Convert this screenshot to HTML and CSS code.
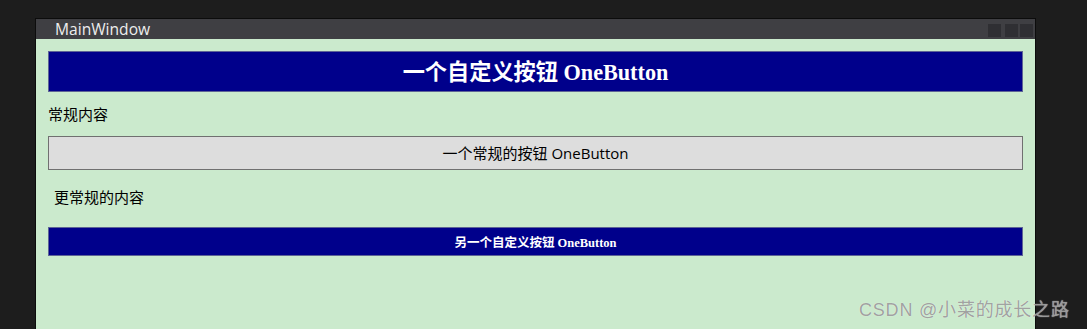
FILE: index.html
```html
<!DOCTYPE html>
<html lang="zh">
<head>
<meta charset="utf-8">
<title>MainWindow</title>
<link rel="stylesheet" href="styles.css">
</head>
<body>
<div class="window">
  <div class="titlebar">
    <span class="title">MainWindow</span>
    <div class="controls">
      <span class="ctl"></span>
      <span class="ctl c2"></span>
      <span class="ctl c3"></span>
    </div>
  </div>
  <div class="content">
    <button class="custom big">一个自定义按钮 OneButton</button>
    <div class="label">常规内容</div>
    <button class="normal">一个常规的按钮 OneButton</button>
    <div class="label indent">更常规的内容</div>
    <button class="custom small">另一个自定义按钮 OneButton</button>
  </div>
</div>
<div class="watermark">CSDN @小菜的成长之路</div>
</body>
</html>
```
FILE: styles.css
```css
html, body {
  margin: 0;
  padding: 0;
  height: 100%;
  overflow: hidden;
}
body {
  background: #1d1d1d;
  font-family: "Noto Sans CJK SC", sans-serif;
  position: relative;
}
.window {
  margin: 18px 0 0 35px;
  width: 999px;
  height: 330px;
  border: 1px solid #0c0c0c;
  display: flex;
  flex-direction: column;
}
.titlebar {
  height: 20px;
  background: #3f3f43;
  display: flex;
  align-items: center;
  justify-content: space-between;
}
.title {
  margin-left: 19px;
  color: #ededed;
  font-family: "Open Sans", "Noto Sans", sans-serif;
  font-size: 15.6px;
  line-height: 20px;
}
.controls {
  display: flex;
  margin-right: 2px;
  margin-top: 2px;
}
.ctl {
  width: 13px;
  height: 13px;
  background: #2f2f33;
}
.c2 { margin-left: 4px; }
.c3 { margin-left: 2px; }
.content {
  flex: 1;
  background: #cbeacd;
  padding: 12px 12px 0 12px;
  display: flex;
  flex-direction: column;
  align-items: stretch;
}
button {
  margin: 0;
  box-sizing: border-box;
  width: 100%;
  cursor: default;
}
.custom {
  background: #00008b;
  border: 1px solid #5e6496;
  color: #ffffff;
  font-family: "Liberation Serif", "Noto Sans CJK SC", serif;
  font-weight: bold;
}
.big {
  height: 41px;
  font-size: 22.2px;
  padding: 0 0 3px 0;
}
.small {
  height: 29px;
  font-size: 12.5px;
  padding: 0 0 1px 0;
  margin-top: 20px;
}
.label {
  font-family: "Noto Sans CJK SC", sans-serif;
  font-size: 15px;
  line-height: 20px;
  color: #000;
  margin-top: 12px;
}
.indent {
  margin-left: 6px;
  margin-top: 17px;
}
.normal {
  height: 34px;
  margin-top: 12px;
  background: #dddddd;
  border: 1px solid #707070;
  color: #000;
  font-family: "Open Sans", "Noto Sans CJK SC", sans-serif;
  font-size: 15px;
  padding: 0 0 1px 0;
}
.watermark {
  position: absolute;
  left: 859px;
  top: 298px;
  font-family: "Liberation Sans", "Noto Sans CJK SC", sans-serif;
  font-size: 18px;
  line-height: 24px;
  letter-spacing: 0.8px;
  color: rgba(150, 150, 150, 0.9);
  text-shadow: 0 0 1px rgba(255, 255, 255, 0.8);
  white-space: nowrap;
}
```
